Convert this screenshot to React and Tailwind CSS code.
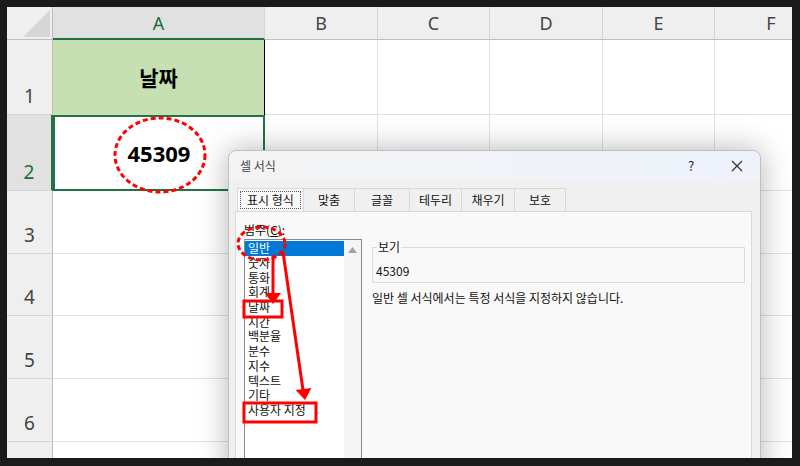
const cols = [
  { l: 'A', cls: 'w-[212px] bg-[#e1e1e1] text-[#1d6b3f] border-b-2 border-b-[#217346]' },
  { l: 'B', cls: 'w-[113px] bg-[#efefef] text-[#444] border-b border-b-[#bdbdbd]' },
  { l: 'C', cls: 'w-[112px] bg-[#efefef] text-[#444] border-b border-b-[#bdbdbd]' },
  { l: 'D', cls: 'w-[113px] bg-[#efefef] text-[#444] border-b border-b-[#bdbdbd]' },
  { l: 'E', cls: 'w-[112px] bg-[#efefef] text-[#444] border-b border-b-[#bdbdbd]' },
  { l: 'F', cls: 'w-[113px] bg-[#efefef] text-[#444] border-b border-b-[#bdbdbd]' },
]

const rest = ['w-[113px]', 'w-[112px]', 'w-[113px]', 'w-[112px]', 'w-[113px]']

// row 7 is only a sliver at the bottom, its number is out of view
const rows = [
  { n: '1', h: 'h-[75px]' },
  { n: '2', h: 'h-[76px]' },
  { n: '3', h: 'h-[63px]' },
  { n: '4', h: 'h-[62px]' },
  { n: '5', h: 'h-[63px]' },
  { n: '6', h: 'h-[63px]' },
  { n: '', h: 'h-[63px]' },
]

const categories = ['일반', '숫자', '통화', '회계', '날짜', '시간', '백분율', '분수', '지수', '텍스트', '기타', '사용자 지정']

const tabs = [
  { t: '맞춤', w: 'w-[51px]' },
  { t: '글꼴', w: 'w-[55px]' },
  { t: '테두리', w: 'w-[52px]' },
  { t: '채우기', w: 'w-[53px]' },
  { t: '보호', w: 'w-[51px]' },
]

const Sheet = () => {
  return (
    <div className="flex flex-col">
      <div className="flex h-[33px] shrink-0">
        <div className="relative w-[46px] shrink-0 bg-[#efefef] border-r border-b border-[#bdbdbd]">
          <svg className="absolute left-[16px] top-[3px]" width="27" height="27" viewBox="0 0 27 27">
            <polygon points="27,0 27,27 0,27" fill="#d6d6d6" />
          </svg>
        </div>
        {cols.map((c) => (
          <div key={c.l} className={`flex shrink-0 items-center justify-center border-r border-r-[#d5d5d5] text-[18px] leading-none ${c.cls}`}>
            {c.l}
          </div>
        ))}
      </div>
      {rows.map((r, idx) => (
        <div key={idx} className={`flex shrink-0 ${r.h}`}>
          <div className={`flex w-[46px] shrink-0 items-end justify-center pb-[8px] border-b border-b-[#d5d5d5] text-[19px] leading-[19px] ${r.n === '2' ? 'bg-[#e1e1e1] text-[#1d6b3f] border-r-2 border-r-[#217346]' : 'bg-[#efefef] text-[#444] border-r border-r-[#bdbdbd]'}`}>
            {r.n}
          </div>
          {r.n === '1' && (
            <div className="flex w-[212px] shrink-0 items-center justify-center bg-[#c6e0b4] border-r border-black font-['Noto_Sans_CJK_KR',sans-serif] text-[21px] font-bold text-black">
              날짜
            </div>
          )}
          {r.n === '2' && (
            <div className="flex w-[212px] shrink-0 items-center justify-center border-2 border-[#217346] text-[22px] font-bold text-black">
              45309
            </div>
          )}
          {r.n !== '1' && r.n !== '2' && (
            <div className="w-[212px] shrink-0 border-r border-b border-[#e1e1e1]" />
          )}
          {rest.map((w, i) => (
            <div key={i} className={`${w} shrink-0 border-r border-b border-[#e1e1e1]`} />
          ))}
        </div>
      ))}
    </div>
  )
}

const FormatDialog = () => {
  return (
    <div className="absolute left-[221px] top-[143px] w-[533px] h-[330px] rounded-t-[8px] border border-[#bfbfbf] bg-[#f0f0f0] shadow-[0_0_30px_rgba(0,0,0,0.3)] font-['Noto_Sans_CJK_KR',sans-serif] text-[12px] text-[#111]">
      <div className="flex h-[29px] items-center rounded-t-[8px] bg-gradient-to-r from-[#f3f3f3] to-[#edf2fb] pl-[11px]">
        <span className="text-[#444]">셀 서식</span>
        <div className="ml-auto flex h-full">
          <div className="flex w-[46px] items-center justify-center text-[13px] text-[#222]">?</div>
          <div className="flex w-[46px] items-center justify-center">
            <svg width="12" height="12" viewBox="0 0 12 12">
              <path d="M1 1L11 11M11 1L1 11" stroke="#333" strokeWidth="1.3" />
            </svg>
          </div>
        </div>
      </div>
      <div className="pl-[6px] pt-[8px]">
        <div className="flex h-[23px] pl-[2px]">
          <div className="flex w-[67px] items-center justify-center border border-b-0 border-[#d9d9d9] bg-[#f9f9f9] p-[2px]">
            <div className="flex h-full w-full items-center justify-center border border-dotted border-[#555]">표시 형식</div>
          </div>
          {tabs.map((t) => (
            <div key={t.t} className={`flex ${t.w} items-center justify-center border border-l-0 border-b-0 border-[#d9d9d9] bg-[#f0f0f0]`}>
              {t.t}
            </div>
          ))}
        </div>
        <div className="flex h-[260px] w-[517px] gap-[10px] border border-[#d9d9d9] bg-[#f9f9f9] pl-[8px]">
          <div className="flex w-[118px] flex-col">
            <div className="mt-[9px] h-[18px] leading-[18px]">
              범주(<span className="underline">C</span>):
            </div>
            <div className="flex flex-1 border border-[#8a8a8a] bg-white">
              <div className="flex w-[99px] flex-col pt-[1px]">
                {categories.map((c, i) => (
                  <div key={c} className={`flex h-[14.7px] items-center overflow-visible pl-[3px] leading-[14px] ${i === 0 ? 'bg-[#0078d7] text-white' : ''}`}>
                    {c}
                  </div>
                ))}
              </div>
              <div className="flex w-[17px] justify-center bg-[#f5f5f5] pt-[7px]">
                <svg width="9" height="6" viewBox="0 0 9 6">
                  <polygon points="4.5,0 9,6 0,6" fill="#a3a3a3" />
                </svg>
              </div>
            </div>
          </div>
          <div className="flex flex-col pt-[35px]">
            <div className="relative h-[36px] w-[373px] border border-[#dcdcdc] pl-[3px] pt-[15px] leading-[16px]">
              <span className="absolute -top-[9px] left-[4px] bg-[#f9f9f9] px-[1px] leading-[16px]">보기</span>
              45309
            </div>
            <div className="mt-[7px] leading-[16px]">일반 셀 서식에서는 특정 서식을 지정하지 않습니다.</div>
          </div>
        </div>
      </div>
    </div>
  )
}

const Marks = () => {
  return (
    <svg className="pointer-events-none absolute left-0 top-0" width="800" height="466" viewBox="0 0 800 466">
      <ellipse cx="160" cy="155" rx="45" ry="37" fill="none" stroke="#ff0000" strokeWidth="3" strokeDasharray="5 3" />
      <ellipse cx="261.5" cy="243.5" rx="23.5" ry="16.5" fill="none" stroke="#ff0000" strokeWidth="3" strokeDasharray="5 3" />
      <rect x="244" y="301" width="38" height="16" fill="none" stroke="#ff0000" strokeWidth="3" />
      <rect x="244" y="403" width="72" height="19" fill="none" stroke="#ff0000" strokeWidth="3" />
      <line x1="273" y1="255" x2="273" y2="294" stroke="#ff0000" strokeWidth="3" />
      <polygon points="265,293 281,293 273,304" fill="#ff0000" />
      <line x1="283" y1="252" x2="303" y2="390" stroke="#ff0000" strokeWidth="3" />
      <polygon points="295.6,390 311.4,388 305,400" fill="#ff0000" />
    </svg>
  )
}

export default function App() {
  return (
    <div className="relative h-[466px] w-[800px] overflow-hidden bg-[#1b1b1b] pb-[8px] pl-[7px] pr-[8px] pt-[7px] font-['Noto_Sans','Noto_Sans_CJK_KR',sans-serif]">
      <div className="relative h-full overflow-hidden bg-white">
        <Sheet />
        <FormatDialog />
      </div>
      <Marks />
    </div>
  )
}
